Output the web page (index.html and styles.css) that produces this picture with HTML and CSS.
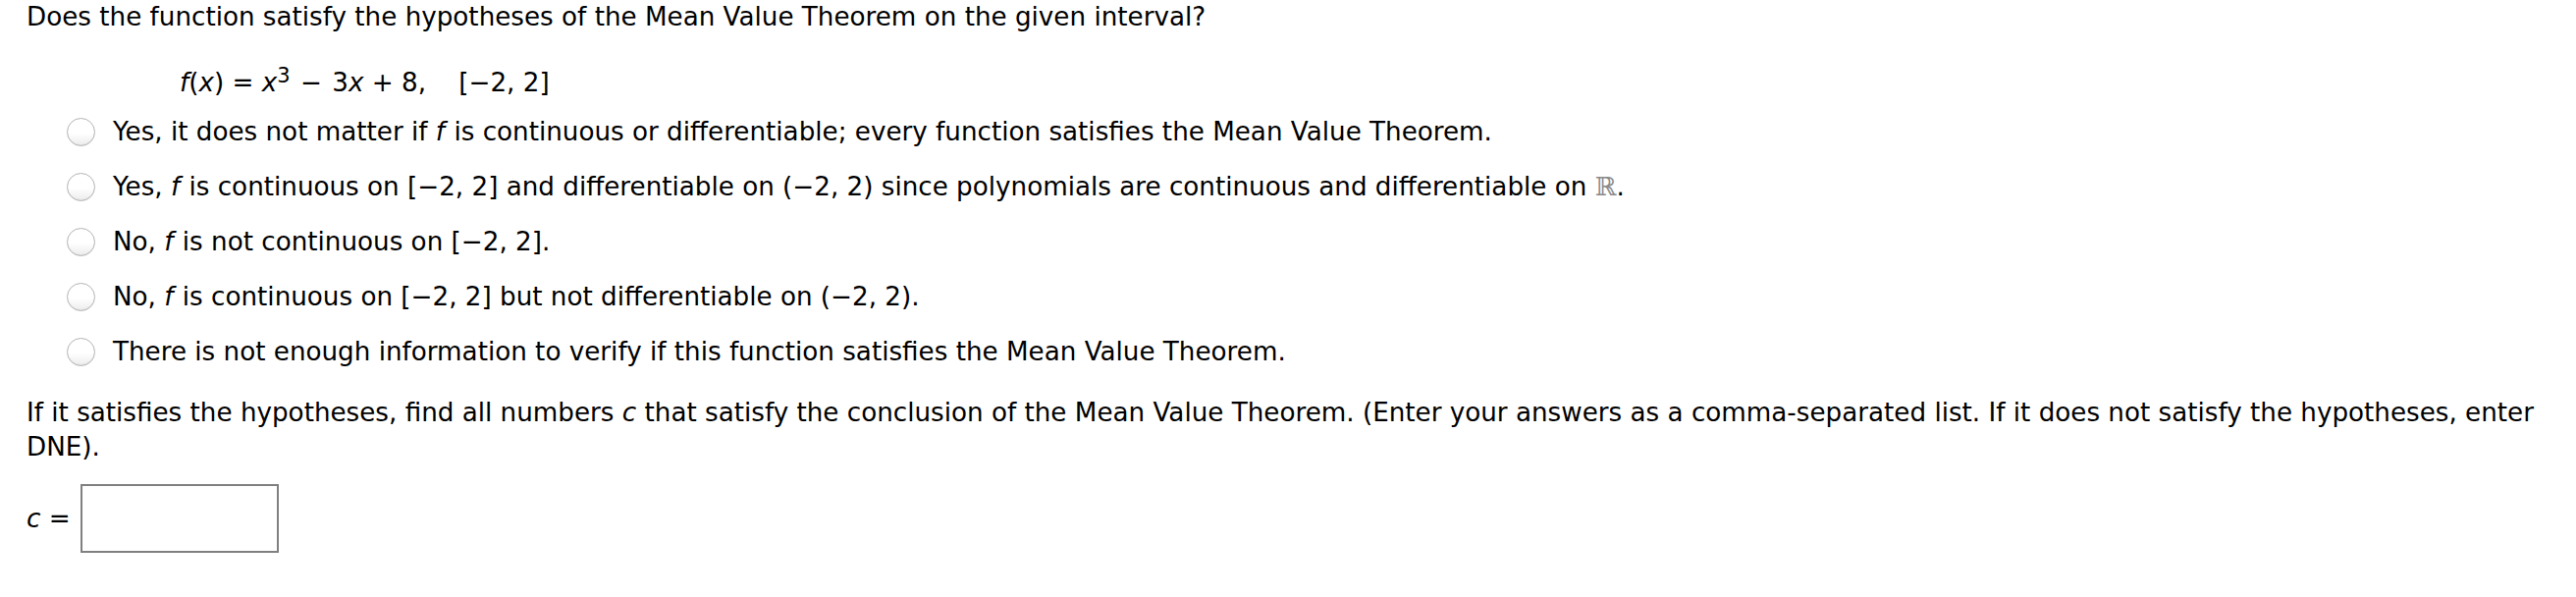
FILE: index.html
```html
<!DOCTYPE html>
<html>
<head>
<meta charset="utf-8">
<link rel="stylesheet" href="styles.css">
</head>
<body>
<div class="page">
  <p class="question">Does the function satisfy the hypotheses of the Mean Value Theorem on the given interval?</p>
  <p class="formula"><i>f</i>(<i>x</i>) = <i>x</i><sup>3</sup> <span class="op">&minus;</span> 3<i>x</i> + 8,&nbsp;&nbsp;&nbsp; [&minus;2, 2]</p>
  <ul class="options">
    <li class="option"><span class="radio"></span><span>Yes, it does not matter if <i>f</i> is continuous or differentiable; every function satisfies the Mean Value Theorem.</span></li>
    <li class="option"><span class="radio"></span><span>Yes, <i>f</i> is continuous on [&minus;2, 2] and differentiable on (&minus;2, 2) since polynomials are continuous and differentiable on <span class="reals">ℝ</span>.</span></li>
    <li class="option"><span class="radio"></span><span>No, <i>f</i> is not continuous on [&minus;2, 2].</span></li>
    <li class="option"><span class="radio"></span><span>No, <i>f</i> is continuous on [&minus;2, 2] but not differentiable on (&minus;2, 2).</span></li>
    <li class="option"><span class="radio"></span><span>There is not enough information to verify if this function satisfies the Mean Value Theorem.</span></li>
  </ul>
  <p class="followup">If it satisfies the hypotheses, find all numbers <i>c</i> that satisfy the conclusion of the Mean Value Theorem. (Enter your answers as a comma-separated list. If it does not satisfy the hypotheses, enter DNE).</p>
  <div class="answer"><span class="label"><i>c</i> =</span><span class="box"></span></div>
</div>
</body>
</html>
```

FILE: styles.css
```css
html, body {
  margin: 0;
  padding: 0;
  background: #ffffff;
}
.page {
  padding: 0 20px 0 27px;
  font-family: "DejaVu Sans", Verdana, sans-serif;
  font-size: 26.2px;
  line-height: 35px;
  color: #000;
}
p { margin: 0; }
i { font-style: italic; }
.question { margin-top: 0; }
.formula {
  margin-top: 32px;
  padding-left: 156px;
}
.formula sup {
  font-size: 0.8em;
  line-height: 0;
  vertical-align: 0.45em;
}
.formula .op {
  margin: 0 2px;
}
.options {
  list-style: none;
  margin: 15px 0 0 0;
  padding: 0 0 0 41px;
  display: flex;
  flex-direction: column;
  gap: 21px;
}
.option {
  display: flex;
  align-items: center;
  gap: 18px;
}
.option i {
  margin-right: 1px;
}
.radio {
  flex: none;
  width: 27px;
  height: 27px;
  border-radius: 50%;
  border: 1.5px solid #b4b4b4;
  background: linear-gradient(#ffffff 0%, #ffffff 55%, #ececec 100%);
  box-shadow: inset 0 -1px 1px rgba(0,0,0,0.06);
}
.reals {
  font-family: "DejaVu Serif", serif;
  color: #8a8a8a;
}
.followup {
  margin-top: 27px;
}
.answer {
  margin-top: 20px;
  display: flex;
  align-items: center;
  gap: 10px;
}
.box {
  display: block;
  width: 198px;
  height: 66px;
  border: 2px solid #808080;
}
```
